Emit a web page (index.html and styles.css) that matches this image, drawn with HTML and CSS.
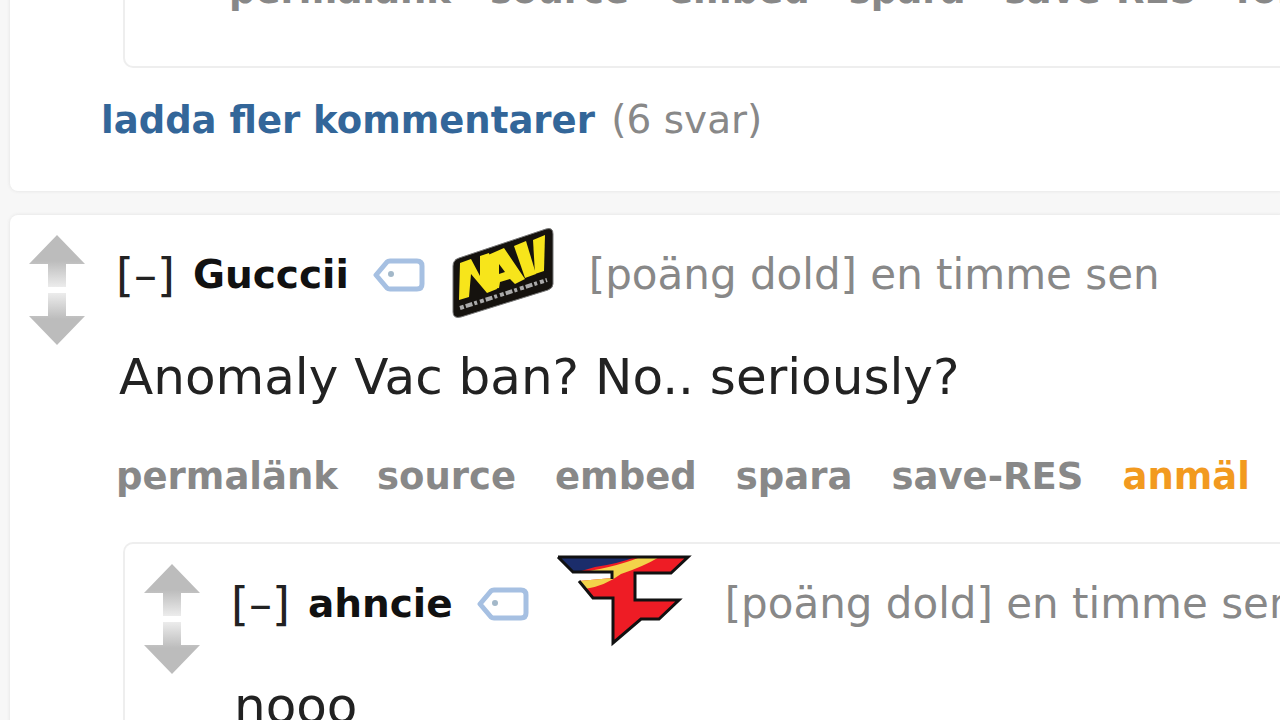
FILE: index.html
```
<!DOCTYPE html>
<html lang="sv">
  <head>
    <meta charset="UTF-8">
    <title>Kommentarer</title>
    <link rel="stylesheet" href="styles.css">
  </head>
  <body>
    <svg class="sprites" aria-hidden="true">
      <defs>
        <linearGradient id="fade" x1="0" y1="0" x2="0" y2="1">
          <stop offset="0.5" stop-color="#bcbcbc"/>
          <stop offset="1" stop-color="#ececec"/>
        </linearGradient>
        <symbol id="arrow" viewBox="0 0 56 52">
          <path fill="url(#fade)" d="M28 0L56 29H37V52H19V29H0z"/>
        </symbol>
        <symbol id="tag" viewBox="0 0 52 34">
          <path fill="none" stroke="#a6c0e2" stroke-width="5" stroke-linejoin="round" d="M3 17L14 4Q15 3 17 3H44Q49 3 49 8V26Q49 31 44 31H17Q15 31 14 30z"/>
          <circle cx="18" cy="16" r="3" fill="#a3b8c9"/>
        </symbol>
      </defs>
    </svg>

    <div class="comment thread-end">
      <div class="child">
        <ul class="buttons">
          <li><a href="#">permalänk</a></li>
          <li><a href="#">source</a></li>
          <li><a href="#">embed</a></li>
          <li><a href="#">spara</a></li>
          <li><a href="#">save-RES</a></li>
          <li><a href="#">förälder</a></li>
        </ul>
      </div>
      <p class="more"><a href="#">ladda fler kommentarer</a> (6 svar)</p>
    </div>

    <div class="comment">
      <div class="midcol">
        <button type="button" aria-label="rösta upp"><svg><use href="#arrow"/></svg></button>
        <button type="button" class="down" aria-label="rösta ner"><svg><use href="#arrow"/></svg></button>
      </div>
      <div class="entry">
        <div class="tagline">
          <a class="expand" href="#">[–]</a>
          <a class="author" href="#">Gucccii</a>
          <svg class="tag"><use href="#tag"/></svg>
          <svg class="flair navi" viewBox="0 0 104 92">
            <path fill="#15120e" stroke="#777" stroke-width="1" d="M8 31L95 2Q102 0 102 7V57Q102 61 97 63L10 90Q2 92 2 85V39Q2 33 8 31z"/>
            <g fill="#f7e51b">
              <path d="M9 36L20 32L29 49V29L38 26L46 62L36 66L20 47L18 70L8 73z"/>
              <path d="M37 28L53 21L74 52L64 57L59 52L49 55L48 61L42 62z"/>
              <path d="M63 19L75 14L85 47L74 51z"/>
              <path d="M82 13L94 8L93 44L84 47z"/>
            </g>
            <path fill="#15120e" d="M48 37L54 45L48 47z"/>
            <path fill="none" stroke="#aaa" stroke-width="4" stroke-dasharray="4 2 7 2 3 3" d="M9 81L96 53"/>
          </svg>
          <span class="score">[poäng dold] en timme sen</span>
        </div>
        <p class="text">Anomaly Vac ban? No.. seriously?</p>
        <ul class="buttons">
          <li><a href="#">permalänk</a></li>
          <li><a href="#">source</a></li>
          <li><a href="#">embed</a></li>
          <li><a href="#">spara</a></li>
          <li><a href="#">save-RES</a></li>
          <li><a class="report" href="#">anmäl</a></li>
        </ul>
        <div class="child comment-child">
          <div class="midcol">
            <button type="button" aria-label="rösta upp"><svg><use href="#arrow"/></svg></button>
            <button type="button" class="down" aria-label="rösta ner"><svg><use href="#arrow"/></svg></button>
          </div>
          <div class="entry">
            <div class="tagline">
              <a class="expand" href="#">[–]</a>
              <a class="author" href="#">ahncie</a>
              <svg class="tag"><use href="#tag"/></svg>
              <svg class="flair faze" viewBox="0 2 136 92">
                <defs>
                  <clipPath id="faze">
                    <path d="M3 3H133L116 19H80V46H124L104 65H86L58 89V44H38L24 27L57 24V18H18z"/>
                  </clipPath>
                </defs>
                <g clip-path="url(#faze)">
                  <path fill="#ee1c25" d="M0 0H136V92H0z"/>
                  <path fill="#f3d34a" d="M15 20Q60 14 88 2H106Q90 12 66 20Q50 32 30 35L20 26z"/>
                  <path fill="#1b2d6b" d="M0 0H88Q68 9 40 13L16 20z"/>
                </g>
                <path fill="none" stroke="#111" stroke-width="3" d="M3 3H133L116 19H80V46H124L104 65H86L58 89V44H38L24 27M57 25V18H18L3 3"/>
              </svg>
              <span class="score">[poäng dold] en timme sen</span>
            </div>
            <p class="text">nooo</p>
          </div>
        </div>
      </div>
    </div>
  </body>
</html>
```
FILE: styles.css
```
body {
   margin: 0;
   padding-left: 10px;
   overflow: hidden;
   background-color: #f7f7f7;
   color: #222;
   font-family: Verdana, "DejaVu Sans", sans-serif;
   font-size: 37px;
   line-height: 44px;
   white-space: nowrap;
}
a {
   color: #369;
   text-decoration: none;
}
p, ul {
   margin: 0;
   padding: 0;
}
.sprites {
   display: block;
   width: 0;
   height: 0;
}

.comment {
   display: flex;
   margin-bottom: 24px;
   background-color: #fff;
   border-radius: 8px 0 0 8px;
   box-shadow: 0 0 3px 1px #e9e9e9;
}
.thread-end {
   display: block;
   padding: 0 0 48px 91px;
}
.child {
   border: 2px solid #eee;
   border-right: 0;
   border-radius: 10px 0 0 10px;
}
.thread-end .child {
   margin-left: 22px;
   padding: 0 0 53px 104px;
   border-top: 0;
   border-top-left-radius: 0;
}
.thread-end .buttons {
   margin-top: -31px;
}
.more {
   padding-top: 30px;
   font-size: 39px;
   color: #888;
}
.more a {
   margin-right: 4px;
   font-size: 37px;
   font-weight: bold;
}

.midcol {
   display: flex;
   flex-direction: column;
   flex: none;
   gap: 6px;
   width: 56px;
   padding: 20px 31px 0 19px;
}
.midcol button {
   display: block;
   padding: 0;
   border: 0;
   background: none;
}
.midcol svg {
   display: block;
   width: 56px;
   height: 52px;
}
.down svg {
   transform: rotate(180deg);
}

.entry {
   flex: 1;
   min-width: 0;
}
.tagline {
   display: flex;
   align-items: center;
   height: 96px;
   padding-top: 12px;
}
.tagline > * {
   flex: none;
}
.expand {
   font-size: 46px;
   color: #222;
}
.author {
   margin-left: 18px;
   font-size: 39px;
   font-weight: bold;
   color: #111;
}
.tag {
   width: 52px;
   height: 34px;
   margin-left: 24px;
}
.flair {
   align-self: flex-start;
   height: 92px;
   margin: 0 34px 0 26px;
}
.navi {
   width: 104px;
}
.faze {
   width: 136px;
   overflow: visible;
}
.score {
   font-size: 42px;
   color: #888;
}
.text {
   padding: 24px 0 0 3px;
   font-size: 50px;
   line-height: 60px;
}
.buttons {
   display: flex;
   gap: 39px;
   list-style: none;
   font-weight: bold;
}
.buttons a {
   color: #888;
}
.buttons a.report {
   color: #f29a1f;
}
.entry .buttons {
   margin-top: 48px;
}
.comment-child {
   display: flex;
   margin: 43px 0 0 7px;
   padding-bottom: 50px;
}
```
